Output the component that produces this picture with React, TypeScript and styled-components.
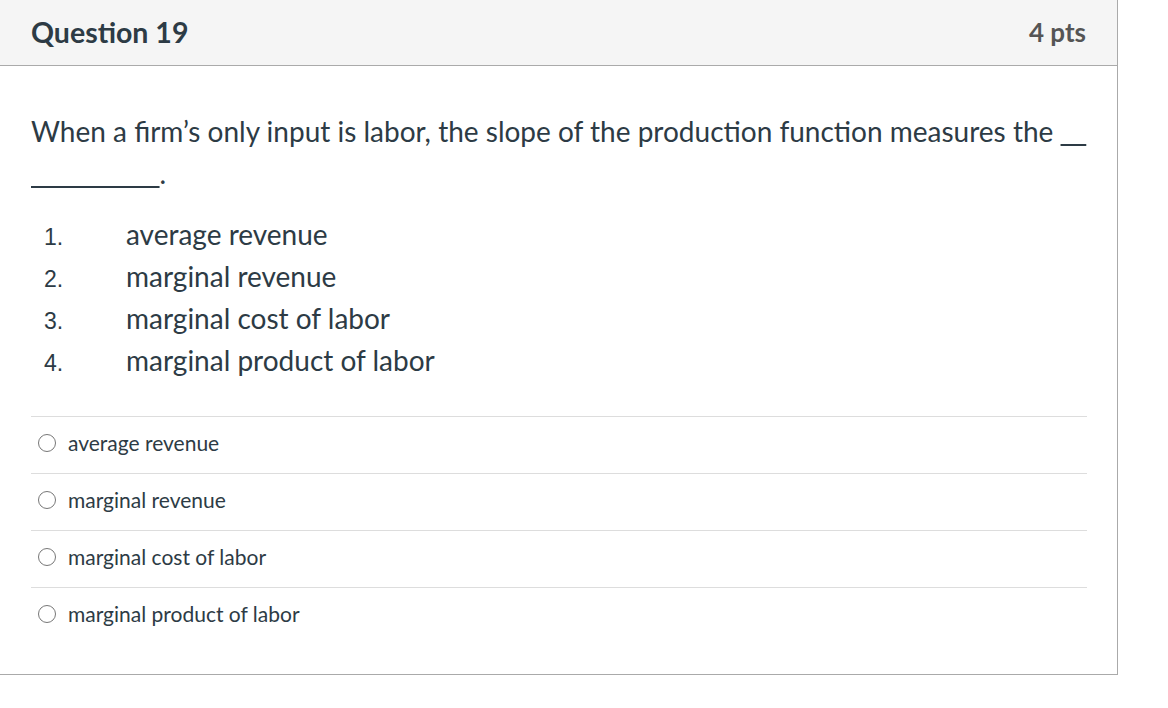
import React from "react";
import styled, { createGlobalStyle } from "styled-components";

const Global = createGlobalStyle`
  html, body { margin: 0; padding: 0; background: #fff; }
  body { font-family: Lato, "Open Sans", "Liberation Sans", sans-serif; color: #2d3b45; }
`;

const Card = styled.div`
  width: 1117px;
  border-right: 1px solid #aaaaaa;
  border-bottom: 1px solid #aaaaaa;
  background: #fff;
`;

const Header = styled.div`
  height: 66px;
  box-sizing: border-box;
  background: #f5f5f5;
  border-bottom: 1px solid #aaaaaa;
  display: flex;
  align-items: center;
  justify-content: space-between;
  padding: 0 31px 2px 31px;
`;

const Title = styled.h2`
  margin: 0;
  font-size: 28.5px;
  font-weight: 700;
  color: #2d3b45;
`;

const Points = styled.span`
  font-size: 26px;
  font-weight: 700;
  color: #555555;
`;

const Body = styled.div`
  padding: 44px 30px 29px 31px;
`;

const Prompt = styled.p`
  margin: 0 -6px 0 0;
  font-size: 28px;
  line-height: 42px;
  color: #2d3b45;
`;

const Blank = styled.span`
  text-decoration: underline;
  text-decoration-thickness: 2px;
  text-underline-offset: 2px;
  text-decoration-skip-ink: none;
`;

const List = styled.ol`
  margin: 19px 0 0 0;
  padding: 0;
  list-style: none;
`;

const ListItem = styled.li`
  display: flex;
  align-items: baseline;
  height: 42px;
  font-size: 28px;
  line-height: 42px;
  color: #2d3b45;
`;

const Num = styled.span`
  width: 95px;
  padding-left: 13px;
  box-sizing: border-box;
  font-family: "Liberation Sans", Arial, sans-serif;
  font-size: 23px;
  line-height: 20px;
`;

const Answers = styled.div`
  margin-top: 35px;
  border-top: 1px solid #dddddd;
`;

const Answer = styled.label<{ $last?: boolean }>`
  display: flex;
  align-items: center;
  gap: 12px;
  height: 57px;
  box-sizing: border-box;
  padding: 0 0 5px 7px;
  border-bottom: 1px solid ${(p) => (p.$last ? "transparent" : "#dddddd")};
  font-size: 21px;
  color: #2d3b45;
`;

const Radio = styled.span`
  width: 16px;
  height: 16px;
  border: 1.5px solid #777777;
  border-radius: 50%;
  flex: none;
  margin-top: 1px;
`;

const items = [
  "average revenue",
  "marginal revenue",
  "marginal cost of labor",
  "marginal product of labor",
];

export default function App() {
  return (
    <>
      <Global />
      <Card>
        <Header>
          <Title>Question 19</Title>
          <Points>4 pts</Points>
        </Header>
        <Body>
          <Prompt>
            When a firm’s only input is labor, the slope of the production function measures the{" "}
            <Blank>__</Blank> <Blank>__________</Blank>.
          </Prompt>
          <List>
            {items.map((t, i) => (
              <ListItem key={t}>
                <Num>{i + 1}.</Num>
                <span>{t}</span>
              </ListItem>
            ))}
          </List>
          <Answers>
            {items.map((t, i) => (
              <Answer key={t} $last={i === items.length - 1}>
                <Radio />
                {t}
              </Answer>
            ))}
          </Answers>
        </Body>
      </Card>
    </>
  );
}
